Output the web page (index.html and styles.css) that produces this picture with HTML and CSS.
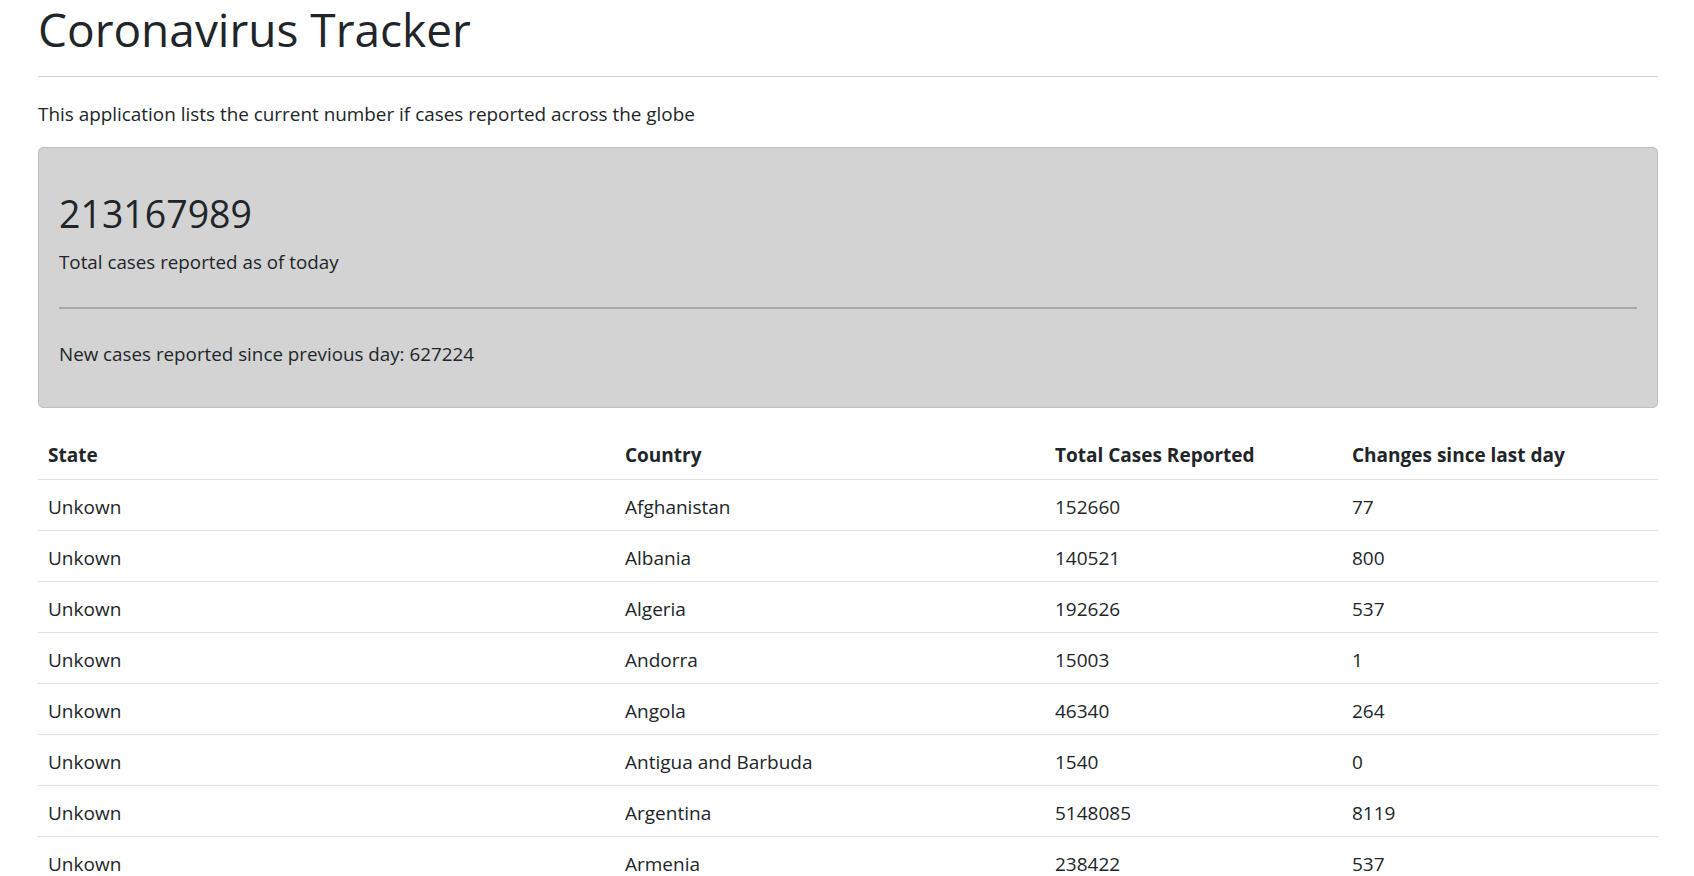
FILE: index.html
```html
<!DOCTYPE html>
<html lang="en">
<head>
<meta charset="utf-8">
<title>Coronavirus Tracker</title>
<link rel="stylesheet" href="styles.css">
</head>
<body>
<div class="container">
  <h1 class="title">Coronavirus Tracker</h1>
  <hr class="title-rule">
  <p class="lead-text">This application lists the current number if cases reported across the globe</p>
  <div class="summary">
    <div class="summary-number">213167989</div>
    <p class="summary-label">Total cases reported as of today</p>
    <hr class="summary-rule">
    <p class="summary-new">New cases reported since previous day: 627224</p>
  </div>
  <table class="cases">
    <thead>
      <tr>
        <th class="col-state">State</th>
        <th class="col-country">Country</th>
        <th class="col-total">Total Cases Reported</th>
        <th class="col-change">Changes since last day</th>
      </tr>
    </thead>
    <tbody>
      <tr><td>Unkown</td><td>Afghanistan</td><td>152660</td><td>77</td></tr>
      <tr><td>Unkown</td><td>Albania</td><td>140521</td><td>800</td></tr>
      <tr><td>Unkown</td><td>Algeria</td><td>192626</td><td>537</td></tr>
      <tr><td>Unkown</td><td>Andorra</td><td>15003</td><td>1</td></tr>
      <tr><td>Unkown</td><td>Angola</td><td>46340</td><td>264</td></tr>
      <tr><td>Unkown</td><td>Antigua and Barbuda</td><td>1540</td><td>0</td></tr>
      <tr><td>Unkown</td><td>Argentina</td><td>5148085</td><td>8119</td></tr>
      <tr><td>Unkown</td><td>Armenia</td><td>238422</td><td>537</td></tr>
    </tbody>
  </table>
</div>
</body>
</html>
```
FILE: styles.css
```css
* { box-sizing: border-box; }

body {
  margin: 0;
  background: #fff;
  color: #212529;
  font-family: "Open Sans", "Noto Sans", "Liberation Sans", sans-serif;
  font-size: 19px;
}

.container {
  padding: 0 36px 40px 38px;
}

.title {
  margin: 0;
  font-size: 46px;
  font-weight: 400;
  line-height: 58px;
}

.title-rule {
  margin: 18px 0 0;
  border: 0;
  border-top: 1px solid #d0d0d0;
  height: 0;
}

.lead-text {
  margin: 24px 0 20px;
  font-size: 18.9px;
  line-height: 26px;
}

.summary {
  background: #d3d3d3;
  border: 1px solid #bfbfbf;
  border-radius: 5px;
  padding: 44px 20px 40px;
  margin-bottom: 20px;
}

.summary-number {
  font-size: 37.5px;
  line-height: 44px;
}

.summary-label {
  margin: 13px 0 0;
  font-size: 18.8px;
  line-height: 26px;
}

.summary-rule {
  margin: 32px 0 0;
  border: 0;
  border-top: 2px solid #a9a9a9;
  height: 0;
}

.summary-new {
  margin: 32px 0 0;
  font-size: 18.8px;
  line-height: 26px;
}

.cases {
  width: 100%;
  border-collapse: collapse;
  table-layout: fixed;
  font-size: 19px;
}

.cases th,
.cases td {
  text-align: left;
  padding: 14px 10px 10px;
  line-height: 26px;
}

.cases th {
  font-weight: 700;
  padding-bottom: 11px;
  border-bottom: 1px solid #dee2e6;
}

.cases td {
  border-top: 1px solid #dee2e6;
}

.col-state { width: 577px; }
.col-country { width: 430px; }
.col-total { width: 297px; }
```
